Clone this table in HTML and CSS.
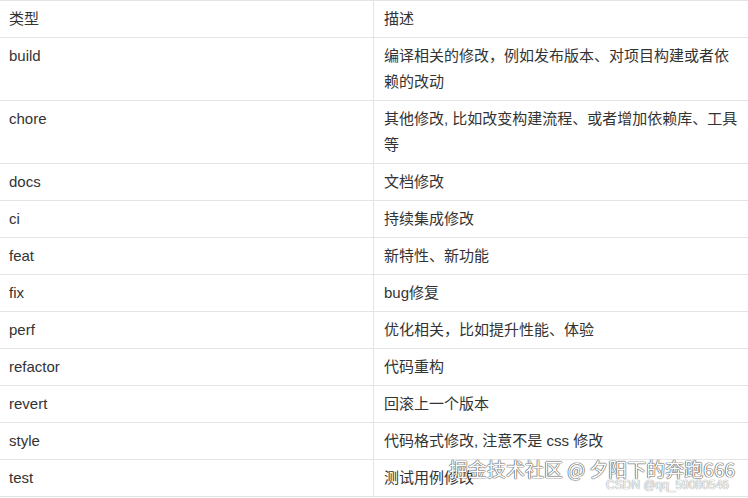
FILE: index.html
```html
<!DOCTYPE html>
<html lang="zh">
<head>
<meta charset="utf-8">
<title>commit 类型</title>
<link rel="stylesheet" href="styles.css">
</head>
<body>
<div class="page">
  <table class="types">
    <tr><td class="col-type">类型</td><td class="col-desc">描述</td></tr>
    <tr><td>build</td><td>编译相关的修改，例如发布版本、对项目构建或者依赖的改动</td></tr>
    <tr><td>chore</td><td>其他修改, 比如改变构建流程、或者增加依赖库、工具等</td></tr>
    <tr><td>docs</td><td>文档修改</td></tr>
    <tr><td>ci</td><td>持续集成修改</td></tr>
    <tr><td>feat</td><td>新特性、新功能</td></tr>
    <tr><td>fix</td><td>bug修复</td></tr>
    <tr><td>perf</td><td>优化相关，比如提升性能、体验</td></tr>
    <tr><td>refactor</td><td>代码重构</td></tr>
    <tr><td>revert</td><td>回滚上一个版本</td></tr>
    <tr><td>style</td><td>代码格式修改, 注意不是 css 修改</td></tr>
    <tr><td>test</td><td>测试用例修改</td></tr>
  </table>
  <div class="watermark">
    <div class="wm-main">掘金技术社区 @ 夕阳下的奔跑666</div>
    <div class="wm-sub">CSDN @qq_59080546</div>
  </div>
</div>
</body>
</html>
```
FILE: styles.css
```css
html, body {
  margin: 0;
  padding: 0;
  background: #ffffff;
}
.page {
  position: relative;
  width: 748px;
  height: 498px;
  overflow: hidden;
}
.types {
  border-collapse: collapse;
  margin-left: -1px;
  width: 752px;
  table-layout: fixed;
  font-family: "Liberation Sans", "Noto Sans CJK SC", sans-serif;
  font-size: 15px;
  line-height: 26px;
  color: #333333;
}
.types td {
  border: 1px solid #e4e4e4;
  padding: 5px 10px;
  vertical-align: top;
}
.types td:first-child {
  padding-left: 9px;
}
.col-type {
  width: 354px;
}
.watermark {
  position: absolute;
  right: 13px;
  top: 456px;
  text-align: right;
  font-family: "Noto Sans CJK SC", sans-serif;
}
.wm-main {
  font-size: 19px;
  line-height: 26px;
  color: #ffffff;
  text-shadow: 0 0 1px #444, 0 0 1px #444, 0 0 1px #666;
  white-space: nowrap;
}
.wm-sub {
  margin-top: -4px;
  font-family: "Liberation Sans", sans-serif;
  font-size: 12px;
  line-height: 14px;
  color: #f4f4f4;
  text-shadow: 0 0 1px #999, 0 0 1px #aaa;
  padding-right: 6px;
}
```
